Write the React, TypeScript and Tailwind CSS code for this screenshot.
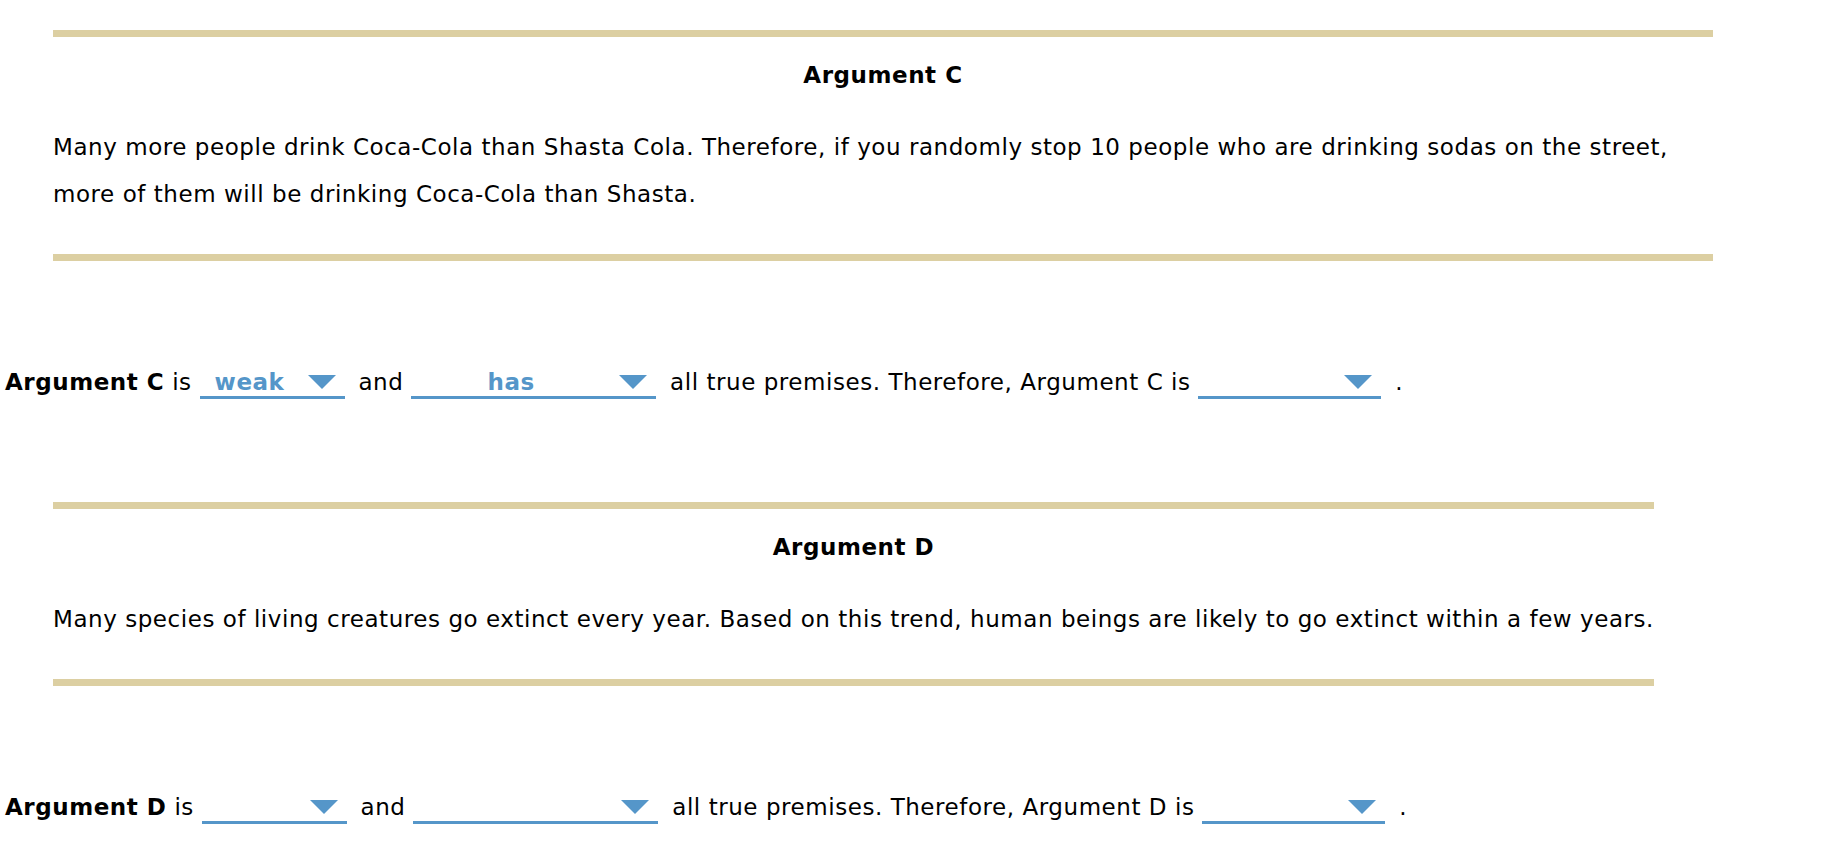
import React from 'react';

interface BlankSelectProps {
  value?: string;
  width: string;
}

// underlined dropdown blank, like the ones in the quiz
const BlankSelect: React.FC<BlankSelectProps> = ({ value, width }) => (
  <span
    className={`inline-flex items-center align-baseline ${width} mr-[6px] border-b-[3px] border-[#5596c9] pb-[1px] leading-[26px]`}
  >
    <span className="flex-1 pr-[8px] text-center font-bold text-[#5596c9]">
      {value ? value : '\u00a0'}
    </span>
    <svg width="28" height="14" viewBox="0 0 28 14" className="mr-[9px] shrink-0">
      <polygon points="0,0 28,0 14,14" fill="#5596c9" />
    </svg>
  </span>
);

interface ArgumentBoxProps {
  title: string;
  text: string;
  width: string;
}

const ArgumentBox: React.FC<ArgumentBoxProps> = ({ title, text, width }) => (
  <div className={`ml-[53px] ${width} border-y-[7px] border-[#dccfa2] pb-[36px]`}>
    <h3 className="mt-[15px] text-center font-bold leading-[47px]">{title}</h3>
    <p className="mt-[25px] leading-[47px]">{text}</p>
  </div>
);

interface AnswerRowProps {
  name: string;
  first?: string;
  second?: string;
  third?: string;
}

const AnswerRow: React.FC<AnswerRowProps> = ({ name, first, second, third }) => (
  <div className="mt-[98px] pl-[5px] leading-[47px] whitespace-nowrap">
    <b>{name}</b> is <BlankSelect value={first} width="w-[145px]" /> and{' '}
    <BlankSelect value={second} width="w-[245px]" /> all true premises. Therefore, {name} is{' '}
    <BlankSelect value={third} width="w-[183px]" /> .
  </div>
);

export default function App() {
  return (
    <div className="min-h-screen bg-white pt-[30px] text-[23px] tracking-[0.55px] text-black font-['DejaVu_Sans','Liberation_Sans',sans-serif]">
      <ArgumentBox
        title="Argument C"
        width="w-[1660px]"
        text="Many more people drink Coca-Cola than Shasta Cola. Therefore, if you randomly stop 10 people who are drinking sodas on the street, more of them will be drinking Coca-Cola than Shasta."
      />
      <AnswerRow name="Argument C" first="weak" second="has" />

      <div className="mt-[96px]">
        <ArgumentBox
          title="Argument D"
          width="w-fit"
          text="Many species of living creatures go extinct every year. Based on this trend, human beings are likely to go extinct within a few years."
        />
      </div>
      <AnswerRow name="Argument D" />
    </div>
  );
}
